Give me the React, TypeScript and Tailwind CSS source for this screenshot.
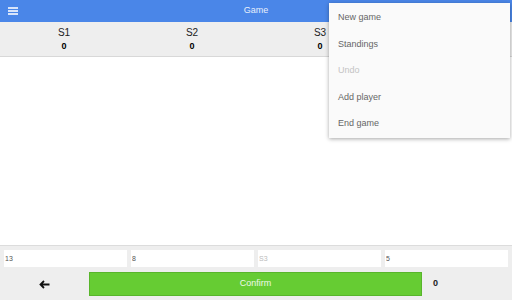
import React from "react";

const players = ["S1", "S2", "S3", "S4"];
const inputs = [
  { value: "13", placeholder: "S1" },
  { value: "8", placeholder: "S2" },
  { value: "", placeholder: "S3" },
  { value: "5", placeholder: "S4" },
];
const menuItems = [
  { label: "New game", disabled: false },
  { label: "Standings", disabled: false },
  { label: "Undo", disabled: true },
  { label: "Add player", disabled: false },
  { label: "End game", disabled: false },
];

const App = () => {
  return (
    <div
      className="relative flex h-[300px] w-[512px] flex-col overflow-hidden bg-white"
      style={{ fontFamily: '"Liberation Sans", Arial, sans-serif' }}
    >
      <div className="flex h-[22px] items-center bg-[#4a86e8] px-2">
        <div className="flex w-[10px] flex-col gap-[1.5px]">
          <span className="h-[1.5px] bg-[#d8e4fa]" />
          <span className="h-[1.5px] bg-[#d8e4fa]" />
          <span className="h-[1.5px] bg-[#d8e4fa]" />
        </div>
        <div className="flex-1 pr-[10px] text-center text-[9px] text-[#e8effc]">Game</div>
      </div>

      <div className="grid h-[35px] grid-cols-4 border-b border-[#d8d8d8] bg-[#eeeeee]">
        {players.map((p) => (
          <div key={p} className="flex flex-col items-center pt-[4px] text-[#222]">
            <span className="text-[10px] leading-[13px]">{p}</span>
            <span className="text-[9px] font-bold leading-[14px] text-black">0</span>
          </div>
        ))}
      </div>

      <div className="flex-1" />

      <div className="border-t border-[#dcdcdc] bg-[#eeeeee] pb-[4px] pt-[4px]">
        <div className="grid grid-cols-4 gap-[4px] px-[4px]">
          {inputs.map((i) => (
            <input
              key={i.placeholder}
              defaultValue={i.value}
              placeholder={i.placeholder}
              className="h-[17px] bg-white px-[1px] text-[7px] text-[#555] placeholder-[#bbb] outline-none"
            />
          ))}
        </div>
        <div className="mt-[5px] flex h-[24px] items-center">
          <div className="flex w-[89px] justify-center">
            <svg width="11" height="9" viewBox="0 0 11 9">
              <path d="M10.5 4.5H2M5 1L1.5 4.5L5 8" fill="none" stroke="#111" strokeWidth="1.8" />
            </svg>
          </div>
          <button className="h-[24px] w-[333px] border border-[#58b52b] bg-[#66cc33] text-[9px] text-[#eef9e8]">
            Confirm
          </button>
          <span className="pl-[11px] text-[9px] font-bold text-[#222]">0</span>
        </div>
      </div>

      <div className="absolute right-[2px] top-[3px] w-[181px] bg-[#fafafa] pb-[1px] pt-[2px] shadow-[0_1px_4px_rgba(0,0,0,0.35)]">
        {menuItems.map((m) => (
          <div
            key={m.label}
            className={`flex h-[26.4px] items-center px-[9px] text-[9px] ${
              m.disabled ? "text-[#c4c4c4]" : "text-[#666]"
            }`}
          >
            {m.label}
          </div>
        ))}
      </div>
    </div>
  );
};

export default App;
